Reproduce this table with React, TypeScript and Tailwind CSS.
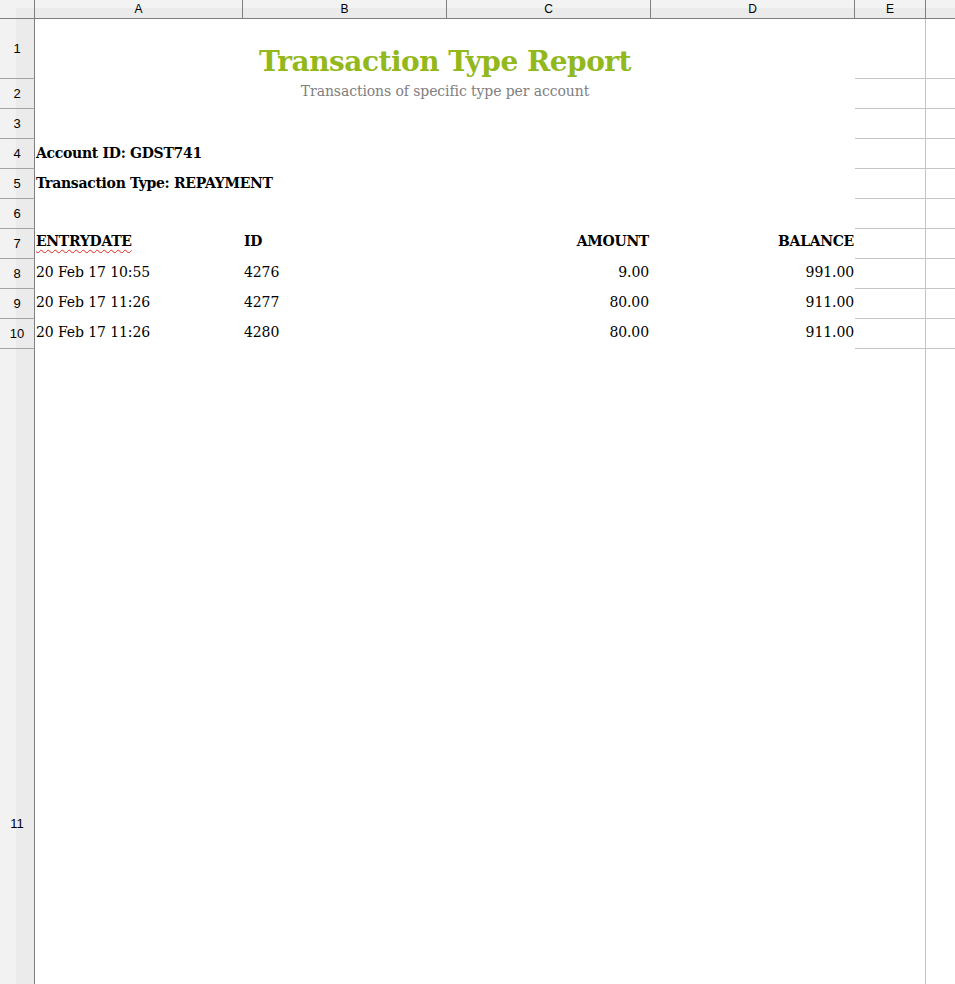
const serif = "font-['DejaVu_Serif','Liberation_Serif',serif]";
const sans = "font-['Liberation_Sans',Arial,sans-serif]";

const columns = [
  { label: "A", width: "w-[208px]" },
  { label: "B", width: "w-[204px]" },
  { label: "C", width: "w-[204px]" },
  { label: "D", width: "w-[204px]" },
  { label: "E", width: "w-[71px]" },
];

const transactions = [
  { date: "20 Feb 17 10:55", id: "4276", amount: "9.00", balance: "991.00" },
  { date: "20 Feb 17 11:26", id: "4277", amount: "80.00", balance: "911.00" },
  { date: "20 Feb 17 11:26", id: "4280", amount: "80.00", balance: "911.00" },
];

// one spreadsheet row: row header, merged A-D area, then empty E and F cells
const Row = ({
  num,
  height,
  children,
}: {
  num: number;
  height: string;
  children?: React.ReactNode;
}) => (
  <div className={`flex ${height}`}>
    <div
      className={`w-[35px] shrink-0 flex items-center justify-center pt-[1px] border-b border-r border-b-[#a3a3a3] border-r-[#7f7f7f] bg-[linear-gradient(90deg,#f2f2f2_16px,#ebebeb_16px)] text-[13px] text-black ${sans}`}
    >
      {num}
    </div>
    <div className={`w-[820px] shrink-0 bg-white text-black ${serif}`}>{children}</div>
    <div className="w-[71px] shrink-0 border-b border-r border-[#c4c4c4] bg-white" />
    <div className="flex-1 border-b border-[#c4c4c4] bg-white" />
  </div>
);

export default function App() {
  return (
    <div className="h-[984px] w-[955px] overflow-hidden bg-white">
      {/* column headers */}
      <div className={`flex h-[19px] border-b border-[#7f7f7f] text-[12px] text-black ${sans}`}>
        <div className="w-[35px] shrink-0 border-r border-[#7f7f7f] bg-[linear-gradient(90deg,#f2f2f2_16px,#ebebeb_16px)]">
          <div className="h-[8px] bg-[#f2f2f2]" />
        </div>
        {columns.map((c) => (
          <div
            key={c.label}
            className={`${c.width} shrink-0 flex items-center justify-center border-r border-[#808080] bg-[linear-gradient(#f3f3f3_45%,#ebebeb_45%)]`}
          >
            {c.label}
          </div>
        ))}
        <div className="flex-1 bg-[linear-gradient(#f3f3f3_45%,#ebebeb_45%)]" />
      </div>

      <Row num={1} height="h-[60px]">
        <div className="flex h-full items-end justify-center pb-[3px]">
          <span className="text-[28px] leading-none font-bold text-[#93b81c] tracking-[-0.5px]">
            Transaction Type Report
          </span>
        </div>
      </Row>
      <Row num={2} height="h-[30px]">
        <div className="flex h-full items-start justify-center pt-[2px]">
          <span className="text-[14px] text-[#808080] tracking-[-0.1px]">
            Transactions of specific type per account
          </span>
        </div>
      </Row>
      <Row num={3} height="h-[30px]" />
      <Row num={4} height="h-[30px]">
        <div className="flex h-full items-center pl-[1px] pb-[2px] text-[14px] font-bold tracking-[-0.3px]">
          Account ID: GDST741
        </div>
      </Row>
      <Row num={5} height="h-[30px]">
        <div className="flex h-full items-center pl-[1px] pb-[2px] text-[14px] font-bold tracking-[-0.3px]">
          Transaction Type: REPAYMENT
        </div>
      </Row>
      <Row num={6} height="h-[30px]" />
      <Row num={7} height="h-[30px]">
        <div className="flex h-full items-center pb-[6px] text-[14px] font-bold tracking-[-0.3px]">
          <div className="w-[208px] pl-[1px]">
            <span className="underline decoration-wavy decoration-[#e0241a] decoration-1 underline-offset-[3px]">
              ENTRYDATE
            </span>
          </div>
          <div className="w-[204px] pl-[1px]">ID</div>
          <div className="w-[204px] pr-[2px] text-right">AMOUNT</div>
          <div className="w-[204px] pr-[1px] text-right">BALANCE</div>
        </div>
      </Row>
      {transactions.map((t, i) => (
        <Row key={t.id} num={8 + i} height="h-[30px]">
          <div className="flex h-full items-center pb-[4px] text-[14px] tracking-[-0.1px]">
            <div className="w-[208px] pl-[1px]">{t.date}</div>
            <div className="w-[204px] pl-[1px]">{t.id}</div>
            <div className="w-[204px] pr-[2px] text-right">{t.amount}</div>
            <div className="w-[204px] pr-[1px] text-right">{t.balance}</div>
          </div>
        </Row>
      ))}
      <Row num={11} height="h-[949px]" />
    </div>
  );
}
